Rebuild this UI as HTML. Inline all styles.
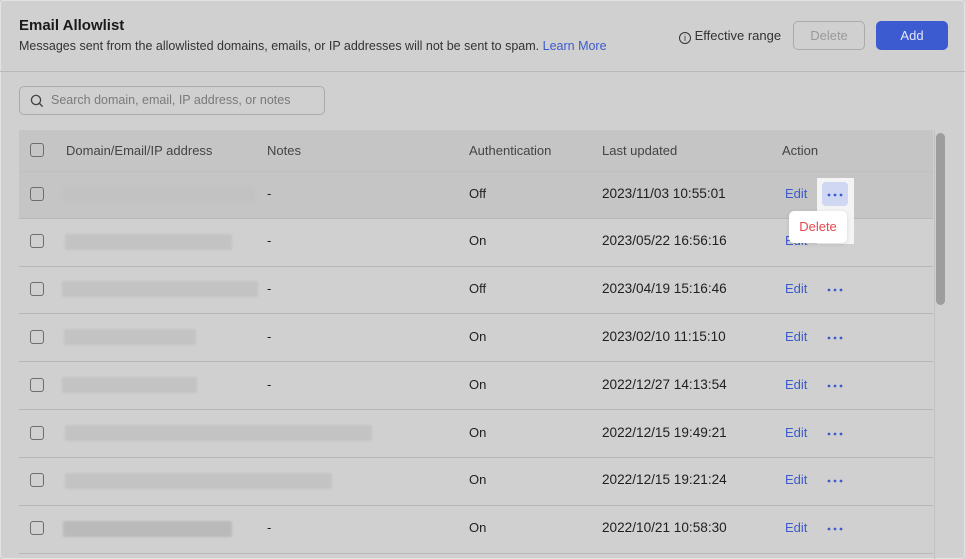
<!DOCTYPE html>
<html><head><style>
*{margin:0;padding:0;box-sizing:border-box}
body{width:965px;height:559px;background:#d0d0d0;font-family:"Liberation Sans",sans-serif;position:relative;overflow:hidden;color:#1f1f1f}
.a{position:absolute;white-space:nowrap}
.cb{position:absolute;left:30px;width:14px;height:14px;border:1px solid #6d6d6d;border-radius:3px}
.line{position:absolute;left:19px;width:914px;height:1px;background:#b9b9b9}
.bar{position:absolute;height:16px;background:#c3c3c3;border-radius:2px;filter:blur(1px)}
.t{font-size:13px;color:#1f1f1f}
.d{font-size:13.6px}
.edit{position:absolute;left:785px;font-size:13px;color:#3c5bcc}
.dots{position:absolute;left:826px;width:20px;height:4px}
</style></head><body>
<div style="position:absolute;left:0;top:0;width:965px;height:559px;border:1px solid #e3e3e3;border-radius:4px"></div>
<div class="a" style="left:19px;top:17px;font-size:15px;font-weight:bold;color:#1a1a1a">Email Allowlist</div>
<div class="a" style="left:19px;top:39px;font-size:12.5px;color:#333">Messages sent from the allowlisted domains, emails, or IP addresses will not be sent to spam. <span style="color:#3c5bcc">Learn More</span></div>
<div class="a" style="left:679px;top:28px;font-size:13px;color:#333"><span style="display:inline-block;width:12px;height:12px;border:1px solid #333;border-radius:50%;font-size:9px;text-align:center;line-height:10px;vertical-align:-1px">i</span> Effective range</div>
<div class="a" style="left:793px;top:21px;width:72px;height:29px;border:1px solid #ababab;border-radius:5px;font-size:13px;color:#9a9a9a;text-align:center;line-height:27px">Delete</div>
<div class="a" style="left:876px;top:21px;width:72px;height:29px;background:#3c5bd1;border-radius:5px;font-size:13px;color:#e4e8f6;text-align:center;line-height:29px">Add</div>
<div style="position:absolute;left:0;top:71px;width:965px;height:1px;background:#b9b9b9"></div>
<div class="a" style="left:19px;top:86px;width:306px;height:29px;border:1px solid #ababab;border-radius:5px"></div>
<svg class="a" style="left:30px;top:94px" width="14" height="14" viewBox="0 0 14 14"><circle cx="6" cy="6" r="4.6" fill="none" stroke="#444" stroke-width="1.3"/><path d="M9.4 9.4L12.6 12.6" stroke="#444" stroke-width="1.4"/></svg>
<div class="a" style="left:51px;top:93px;font-size:12.5px;color:#7a7a7a">Search domain, email, IP address, or notes</div>
<div style="position:absolute;left:19px;top:130px;width:914px;height:88px;background:#c5c5c5"></div>
<div class="cb" style="top:143px"></div>
<div class="a t" style="left:66px;top:143px;color:#444">Domain/Email/IP address</div>
<div class="a t" style="left:267px;top:143px;color:#444">Notes</div>
<div class="a t" style="left:469px;top:143px;color:#444">Authentication</div>
<div class="a t" style="left:602px;top:143px;color:#444">Last updated</div>
<div class="a t" style="left:782px;top:143px;color:#444">Action</div>
<div style="position:absolute;left:19px;top:171px;width:914px;height:1px;background:#c0c0c0"></div>
<div style="position:absolute;left:936px;top:133px;width:9px;height:172px;background:#9d9d9d;border-radius:5px"></div>
<div style="position:absolute;left:934px;top:130px;width:1px;height:429px;background:#c2c2c2"></div>

<div class="line" style="top:218px"></div><div class="line" style="top:266px"></div><div class="line" style="top:313px"></div><div class="line" style="top:361px"></div><div class="line" style="top:409px"></div><div class="line" style="top:457px"></div><div class="line" style="top:505px"></div><div class="line" style="top:553px"></div>

<div class="bar" style="left:63px;top:186px;width:192px;background:#c2c2c2"></div>
<div class="bar" style="left:65px;top:234px;width:167px"></div>
<div class="bar" style="left:62px;top:281px;width:196px"></div>
<div class="bar" style="left:64px;top:329px;width:132px"></div>
<div class="bar" style="left:62px;top:377px;width:135px"></div>
<div class="bar" style="left:65px;top:425px;width:307px"></div>
<div class="bar" style="left:65px;top:473px;width:267px"></div>
<div class="bar" style="left:63px;top:521px;width:169px;background:#bababa"></div>

<div class="cb" style="top:187px"></div><div class="cb" style="top:234px"></div><div class="cb" style="top:282px"></div><div class="cb" style="top:330px"></div><div class="cb" style="top:378px"></div><div class="cb" style="top:426px"></div><div class="cb" style="top:473px"></div><div class="cb" style="top:521px"></div>

<div class="a t" style="left:267px;top:186px">-</div><div class="a t" style="left:267px;top:233px">-</div><div class="a t" style="left:267px;top:281px">-</div><div class="a t" style="left:267px;top:329px">-</div><div class="a t" style="left:267px;top:377px">-</div><div class="a t" style="left:267px;top:520px">-</div>

<div class="a t" style="left:469px;top:186px">Off</div><div class="a t" style="left:469px;top:233px">On</div><div class="a t" style="left:469px;top:281px">Off</div><div class="a t" style="left:469px;top:329px">On</div><div class="a t" style="left:469px;top:377px">On</div><div class="a t" style="left:469px;top:425px">On</div><div class="a t" style="left:469px;top:472px">On</div><div class="a t" style="left:469px;top:520px">On</div>

<div class="a t d" style="left:602px;top:186px">2023/11/03 10:55:01</div><div class="a t d" style="left:602px;top:233px">2023/05/22 16:56:16</div><div class="a t d" style="left:602px;top:281px">2023/04/19 15:16:46</div><div class="a t d" style="left:602px;top:329px">2023/02/10 11:15:10</div><div class="a t d" style="left:602px;top:377px">2022/12/27 14:13:54</div><div class="a t d" style="left:602px;top:425px">2022/12/15 19:49:21</div><div class="a t d" style="left:602px;top:472px">2022/12/15 19:21:24</div><div class="a t d" style="left:602px;top:520px">2022/10/21 10:58:30</div>

<div class="edit" style="top:186px">Edit</div><div class="edit" style="top:233px">Edit</div><div class="edit" style="top:281px">Edit</div><div class="edit" style="top:329px">Edit</div><div class="edit" style="top:377px">Edit</div><div class="edit" style="top:425px">Edit</div><div class="edit" style="top:472px">Edit</div><div class="edit" style="top:520px">Edit</div>

<svg width="0" height="0" style="position:absolute"><defs><g id="dd"><circle cx="3" cy="2" r="1.4" fill="#3c5bcc"/><circle cx="9" cy="2" r="1.4" fill="#3c5bcc"/><circle cx="15" cy="2" r="1.4" fill="#3c5bcc"/></g></defs></svg>
<svg class="dots" style="top:288px"><use href="#dd"/></svg>
<svg class="dots" style="top:336px"><use href="#dd"/></svg>
<svg class="dots" style="top:384px"><use href="#dd"/></svg>
<svg class="dots" style="top:432px"><use href="#dd"/></svg>
<svg class="dots" style="top:479px"><use href="#dd"/></svg>
<svg class="dots" style="top:527px"><use href="#dd"/></svg>

<div style="position:absolute;left:817px;top:178px;width:37px;height:66px;background:#f4f4f4"></div>
<div style="position:absolute;left:822px;top:182px;width:26px;height:24px;background:#cfd7f3;border-radius:4px"></div>
<svg class="dots" style="top:193px"><use href="#dd"/></svg>
<div style="position:absolute;left:789px;top:211px;width:58px;height:32px;background:#fff;border-radius:5px;box-shadow:0 1px 4px rgba(0,0,0,.12);font-size:13px;color:#e5484d;text-align:center;line-height:32px">Delete</div>
</body></html>
